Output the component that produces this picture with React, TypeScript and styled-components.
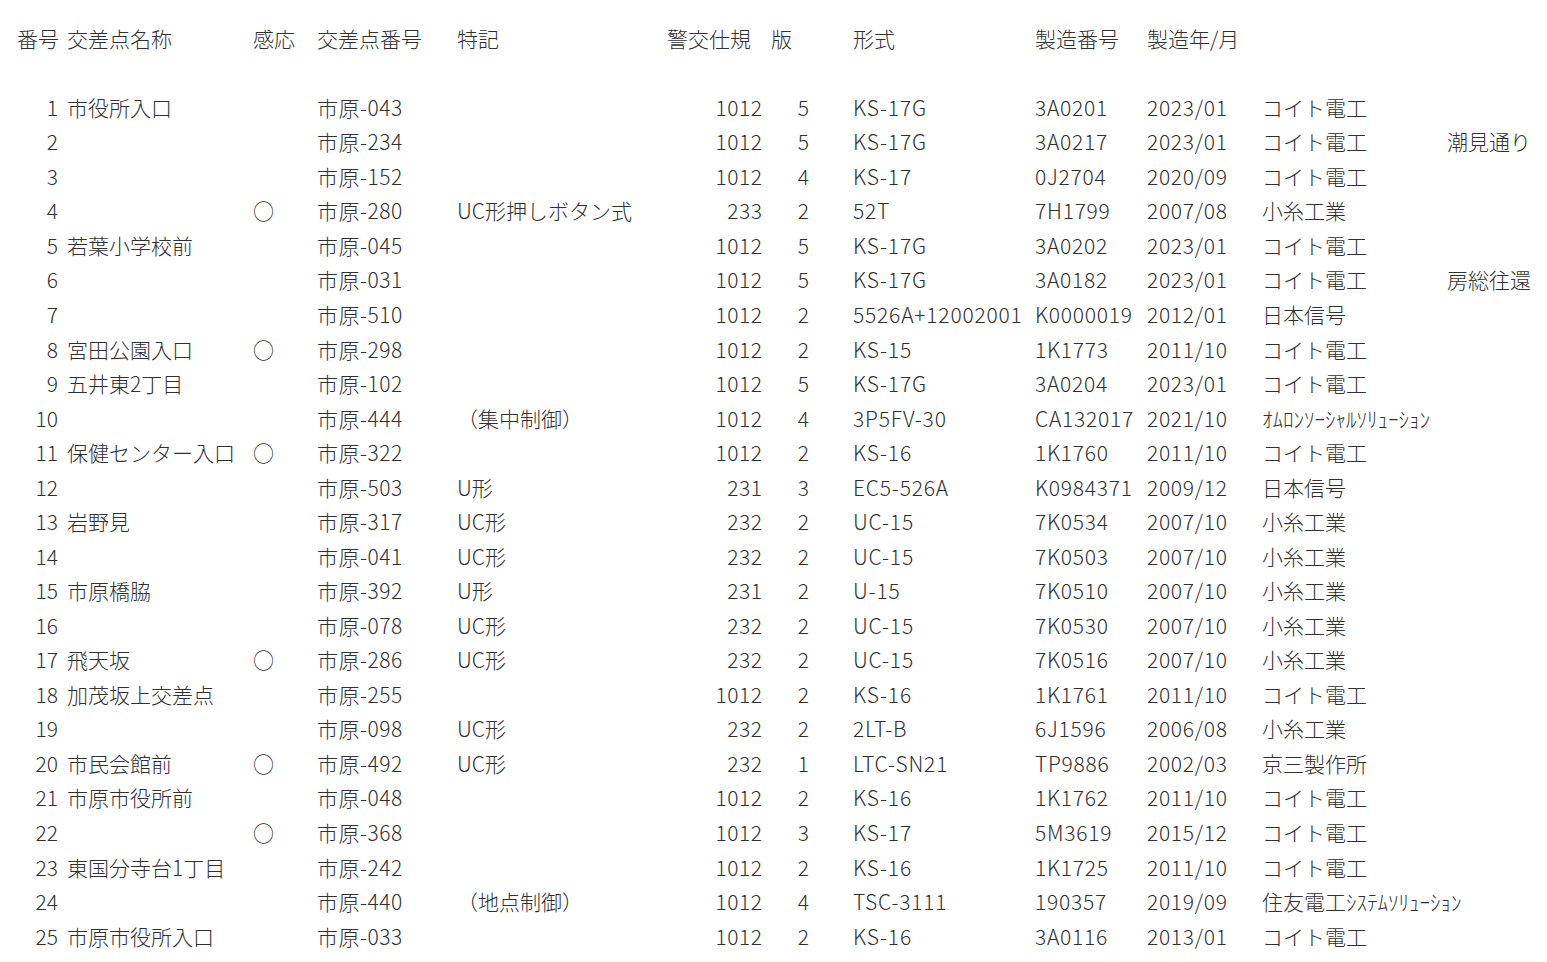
import React from 'react'
import styled, { createGlobalStyle } from 'styled-components'

type Align = 'left' | 'right'

interface Column {
  key: string,
  title: string,
  width: number,
  align: Align,
  padRight?: number,
  spacing?: number,
}

interface CellProps {
  $align: Align,
  $padRight: number,
  $spacing: number,
}

const GlobalStyle = createGlobalStyle`
  html, body {
    margin: 0;
    padding: 0;
    background: #ffffff;
  }
  body {
    font-family: "Noto Sans CJK JP", "Noto Sans", sans-serif;
    color: #303030;
  }
`

// column widths follow the cell edges of the sheet
const columns: Column[] = [
  { key: 'no', title: '番号', width: 67, align: 'right', padRight: 9 },
  { key: 'name', title: '交差点名称', width: 186, align: 'left' },
  { key: 'sensor', title: '感応', width: 64, align: 'left' },
  { key: 'code', title: '交差点番号', width: 140, align: 'left', spacing: 0.5 },
  { key: 'note', title: '特記', width: 210, align: 'left' },
  { key: 'spec', title: '警交仕規', width: 104, align: 'right', padRight: 8.5, spacing: 0.5 },
  { key: 'ver', title: '版', width: 82, align: 'right', padRight: 44 },
  { key: 'model', title: '形式', width: 182, align: 'left', spacing: 0.8 },
  { key: 'serial', title: '製造番号', width: 112, align: 'left', spacing: 0.75 },
  { key: 'date', title: '製造年/月', width: 115, align: 'left', spacing: 0.7 },
  { key: 'maker', title: '', width: 185, align: 'left' },
  { key: 'remark', title: '', width: 100, align: 'left' },
]

// no, name, sensor, code, note, spec, ver, model, serial, date, maker, remark
const rows: string[][] = [
  ['1', '市役所入口', '', '市原-043', '', '1012', '5', 'KS-17G', '3A0201', '2023/01', 'コイト電工', ''],
  ['2', '', '', '市原-234', '', '1012', '5', 'KS-17G', '3A0217', '2023/01', 'コイト電工', '潮見通り'],
  ['3', '', '', '市原-152', '', '1012', '4', 'KS-17', '0J2704', '2020/09', 'コイト電工', ''],
  ['4', '', '○', '市原-280', 'UC形押しボタン式', '233', '2', '52T', '7H1799', '2007/08', '小糸工業', ''],
  ['5', '若葉小学校前', '', '市原-045', '', '1012', '5', 'KS-17G', '3A0202', '2023/01', 'コイト電工', ''],
  ['6', '', '', '市原-031', '', '1012', '5', 'KS-17G', '3A0182', '2023/01', 'コイト電工', '房総往還'],
  ['7', '', '', '市原-510', '', '1012', '2', '5526A+12002001', 'K0000019', '2012/01', '日本信号', ''],
  ['8', '宮田公園入口', '○', '市原-298', '', '1012', '2', 'KS-15', '1K1773', '2011/10', 'コイト電工', ''],
  ['9', '五井東2丁目', '', '市原-102', '', '1012', '5', 'KS-17G', '3A0204', '2023/01', 'コイト電工', ''],
  ['10', '', '', '市原-444', '（集中制御）', '1012', '4', '3P5FV-30', 'CA132017', '2021/10', 'ｵﾑﾛﾝｿｰｼｬﾙｿﾘｭｰｼｮﾝ', ''],
  ['11', '保健センター入口', '○', '市原-322', '', '1012', '2', 'KS-16', '1K1760', '2011/10', 'コイト電工', ''],
  ['12', '', '', '市原-503', 'U形', '231', '3', 'EC5-526A', 'K0984371', '2009/12', '日本信号', ''],
  ['13', '岩野見', '', '市原-317', 'UC形', '232', '2', 'UC-15', '7K0534', '2007/10', '小糸工業', ''],
  ['14', '', '', '市原-041', 'UC形', '232', '2', 'UC-15', '7K0503', '2007/10', '小糸工業', ''],
  ['15', '市原橋脇', '', '市原-392', 'U形', '231', '2', 'U-15', '7K0510', '2007/10', '小糸工業', ''],
  ['16', '', '', '市原-078', 'UC形', '232', '2', 'UC-15', '7K0530', '2007/10', '小糸工業', ''],
  ['17', '飛天坂', '○', '市原-286', 'UC形', '232', '2', 'UC-15', '7K0516', '2007/10', '小糸工業', ''],
  ['18', '加茂坂上交差点', '', '市原-255', '', '1012', '2', 'KS-16', '1K1761', '2011/10', 'コイト電工', ''],
  ['19', '', '', '市原-098', 'UC形', '232', '2', '2LT-B', '6J1596', '2006/08', '小糸工業', ''],
  ['20', '市民会館前', '○', '市原-492', 'UC形', '232', '1', 'LTC-SN21', 'TP9886', '2002/03', '京三製作所', ''],
  ['21', '市原市役所前', '', '市原-048', '', '1012', '2', 'KS-16', '1K1762', '2011/10', 'コイト電工', ''],
  ['22', '', '○', '市原-368', '', '1012', '3', 'KS-17', '5M3619', '2015/12', 'コイト電工', ''],
  ['23', '東国分寺台1丁目', '', '市原-242', '', '1012', '2', 'KS-16', '1K1725', '2011/10', 'コイト電工', ''],
  ['24', '', '', '市原-440', '（地点制御）', '1012', '4', 'TSC-3111', '190357', '2019/09', '住友電工ｼｽﾃﾑｿﾘｭｰｼｮﾝ', ''],
  ['25', '市原市役所入口', '', '市原-033', '', '1012', '2', 'KS-16', '3A0116', '2013/01', 'コイト電工', ''],
]

const Sheet = styled.div`
  display: grid;
  grid-template-columns: ${columns.map(c => `${c.width}px`).join(' ')};
  grid-auto-rows: 34.54px;
  padding: 20.5px 0 0 0;
  font-size: 21px;
  font-weight: 300;
  white-space: nowrap;
`

const HeaderCell = styled.div`
  display: flex;
  align-items: center;
  justify-content: flex-start;
  overflow: visible;
`

const FirstHeaderCell = styled(HeaderCell)`
  justify-content: flex-end;
  padding-right: 8px;
`

const Cell = styled.div<CellProps>`
  display: flex;
  align-items: center;
  justify-content: ${props => (props.$align === 'right' ? 'flex-end' : 'flex-start')};
  padding-right: ${props => props.$padRight}px;
  letter-spacing: ${props => props.$spacing}px;
  overflow: visible;
`

const SpacerRow = styled.div`
  grid-column: 1 / -1;
`

const App: React.FC = () => {
  return (
    <>
      <GlobalStyle />
      <Sheet>
        {columns.map((col, i) =>
          i === 0
            ? <FirstHeaderCell key={col.key}>{col.title}</FirstHeaderCell>
            : <HeaderCell key={col.key}>{col.title}</HeaderCell>
        )}
        <SpacerRow />
        {rows.map(row =>
          row.map((value, i) => (
            <Cell
              key={`${row[0]}-${columns[i].key}`}
              $align={columns[i].align}
              $padRight={columns[i].padRight || 0}
              $spacing={columns[i].spacing || 0}
            >
              {value}
            </Cell>
          ))
        )}
      </Sheet>
    </>
  )
}

export default App
